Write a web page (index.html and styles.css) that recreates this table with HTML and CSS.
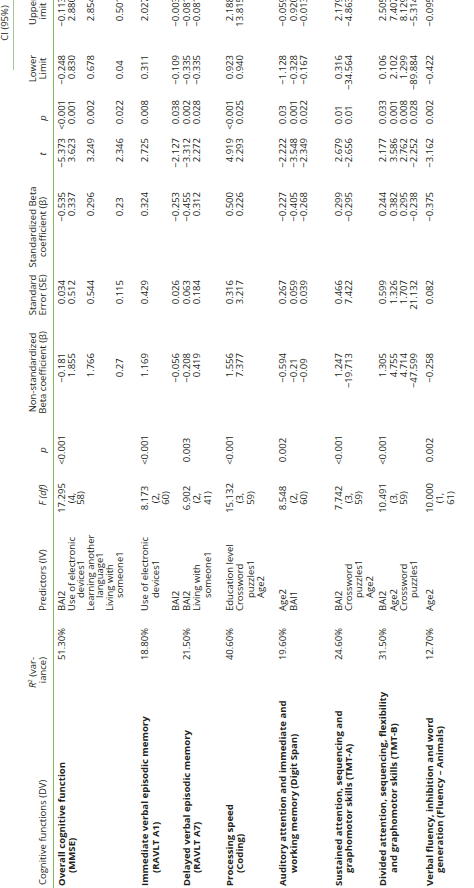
FILE: index.html
```html
<!DOCTYPE html>
<html lang="en">
<head>
<meta charset="utf-8">
<title>Regression table</title>
<link rel="stylesheet" href="styles.css">
</head>
<body>
<div class="viewport">
  <div class="sheet">
    <div class="thead">
      <div class="h dv"><span class="ln">Cognitive functions (DV)</span></div>
      <div class="h r2"><span class="ln"><i>R</i><sup>2</sup> (var-</span><span class="ln">iance)</span></div>
      <div class="h pr"><span class="ln">Predictors (IV)</span></div>
      <div class="h f"><span class="ln"><i>F (df)</i></span></div>
      <div class="h p"><span class="ln"><i>p</i></span></div>
      <div class="h ns"><span class="ln">Non-standardized</span><span class="ln">Beta coefficient (β)</span></div>
      <div class="h se"><span class="ln">Standard</span><span class="ln">Error (SE)</span></div>
      <div class="h sb"><span class="ln">Standardized Beta</span><span class="ln">coefficient (β)</span></div>
      <div class="h t"><span class="ln"><i>t</i></span></div>
      <div class="h p2"><span class="ln"><i>p</i></span></div>
      <div class="h ci"><span class="ln">CI (95%)</span></div>
      <div class="h lo"><span class="ln">Lower</span><span class="ln">Limit</span></div>
      <div class="h up"><span class="ln">Upper</span><span class="ln">imit</span></div>
    </div>

    <div class="grp g1">
      <div class="c dv"><span class="ln">Overall cognitive function</span><span class="ln ind">(MMSE)</span></div>
      <div class="c r2"><span class="ln">51.30%</span></div>
      <div class="c pr"><span class="ln">BAI2</span><span class="ln">Use of electronic</span><span class="ln ind">devices1</span><span class="ln">Learning another</span><span class="ln ind">language1</span><span class="ln">Living with</span><span class="ln ind">someone1</span></div>
      <div class="c f"><span class="ln">17.295</span><span class="ln">(4,</span><span class="ln">58)</span></div>
      <div class="c p"><span class="ln">&lt;0.001</span></div>
      <div class="c ns"><span class="ln">−0.181</span><span class="ln">1.855</span><span class="ln"></span><span class="ln">1.766</span><span class="ln"></span><span class="ln"></span><span class="ln d2">0.27</span></div>
      <div class="c se"><span class="ln">0.034</span><span class="ln">0.512</span><span class="ln"></span><span class="ln">0.544</span><span class="ln"></span><span class="ln"></span><span class="ln">0.115</span></div>
      <div class="c sb"><span class="ln">−0.535</span><span class="ln">0.337</span><span class="ln"></span><span class="ln">0.296</span><span class="ln"></span><span class="ln"></span><span class="ln d2">0.23</span></div>
      <div class="c t"><span class="ln">−5.373</span><span class="ln">3.623</span><span class="ln"></span><span class="ln">3.249</span><span class="ln"></span><span class="ln"></span><span class="ln">2.346</span></div>
      <div class="c p2"><span class="ln">&lt;0.001</span><span class="ln">0.001</span><span class="ln"></span><span class="ln">0.002</span><span class="ln"></span><span class="ln"></span><span class="ln">0.022</span></div>
      <div class="c lo"><span class="ln">−0.248</span><span class="ln">0.830</span><span class="ln"></span><span class="ln">0.678</span><span class="ln"></span><span class="ln"></span><span class="ln d2">0.04</span></div>
      <div class="c up"><span class="ln">−0.113</span><span class="ln">2.880</span><span class="ln"></span><span class="ln">2.854</span><span class="ln"></span><span class="ln"></span><span class="ln">0.501</span></div>
    </div>

    <div class="grp g2">
      <div class="c dv"><span class="ln">Immediate verbal episodic memory</span><span class="ln ind">(RAVLT A1)</span></div>
      <div class="c r2"><span class="ln">18.80%</span></div>
      <div class="c pr"><span class="ln">Use of electronic</span><span class="ln ind">devices1</span><span class="ln"></span><span class="ln">BAI2</span></div>
      <div class="c f"><span class="ln">8.173</span><span class="ln">(2,</span><span class="ln">60)</span></div>
      <div class="c p"><span class="ln">&lt;0.001</span></div>
      <div class="c ns"><span class="ln">1.169</span><span class="ln"></span><span class="ln"></span><span class="ln">−0.056</span></div>
      <div class="c se"><span class="ln">0.429</span><span class="ln"></span><span class="ln"></span><span class="ln">0.026</span></div>
      <div class="c sb"><span class="ln">0.324</span><span class="ln"></span><span class="ln"></span><span class="ln">−0.253</span></div>
      <div class="c t"><span class="ln">2.725</span><span class="ln"></span><span class="ln"></span><span class="ln">−2.127</span></div>
      <div class="c p2"><span class="ln">0.008</span><span class="ln"></span><span class="ln"></span><span class="ln">0.038</span></div>
      <div class="c lo"><span class="ln">0.311</span><span class="ln"></span><span class="ln"></span><span class="ln">−0.109</span></div>
      <div class="c up"><span class="ln">2.027</span><span class="ln"></span><span class="ln"></span><span class="ln">−0.003</span></div>
    </div>

    <div class="grp g3">
      <div class="c dv"><span class="ln">Delayed verbal episodic memory</span><span class="ln ind">(RAVLT A7)</span></div>
      <div class="c r2"><span class="ln">21.50%</span></div>
      <div class="c pr"><span class="ln">BAI2</span><span class="ln">Living with</span><span class="ln ind">someone1</span></div>
      <div class="c f"><span class="ln">6.902</span><span class="ln">(2,</span><span class="ln">41)</span></div>
      <div class="c p"><span class="ln">0.003</span></div>
      <div class="c ns"><span class="ln">−0.208</span><span class="ln">0.419</span></div>
      <div class="c se"><span class="ln">0.063</span><span class="ln">0.184</span></div>
      <div class="c sb"><span class="ln">−0.455</span><span class="ln">0.312</span></div>
      <div class="c t"><span class="ln">−3.312</span><span class="ln">2.272</span></div>
      <div class="c p2"><span class="ln">0.002</span><span class="ln">0.028</span></div>
      <div class="c lo"><span class="ln">−0.335</span><span class="ln">−0.335</span></div>
      <div class="c up"><span class="ln">−0.081</span><span class="ln">−0.081</span></div>
    </div>

    <div class="grp g4">
      <div class="c dv"><span class="ln">Processing speed</span><span class="ln ind">(Coding)</span></div>
      <div class="c r2"><span class="ln">40.60%</span></div>
      <div class="c pr"><span class="ln">Education level</span><span class="ln">Crossword</span><span class="ln ind">puzzles1</span><span class="ln ind">Age2</span></div>
      <div class="c f"><span class="ln">15.132</span><span class="ln">(3,</span><span class="ln">59)</span></div>
      <div class="c p"><span class="ln">&lt;0.001</span></div>
      <div class="c ns"><span class="ln">1.556</span><span class="ln">7.377</span></div>
      <div class="c se"><span class="ln">0.316</span><span class="ln">3.217</span></div>
      <div class="c sb"><span class="ln">0.500</span><span class="ln">0.226</span></div>
      <div class="c t"><span class="ln">4.919</span><span class="ln">2.293</span></div>
      <div class="c p2"><span class="ln">&lt;0.001</span><span class="ln">0.025</span></div>
      <div class="c lo"><span class="ln">0.923</span><span class="ln">0.940</span></div>
      <div class="c up"><span class="ln">2.188</span><span class="ln">13.815</span></div>
    </div>

    <div class="grp g5">
      <div class="c dv"><span class="ln">Auditory attention and immediate and</span><span class="ln ind">working memory (Digit Span)</span></div>
      <div class="c r2"><span class="ln">19.60%</span></div>
      <div class="c pr"><span class="ln">Age2</span><span class="ln">BAI1</span></div>
      <div class="c f"><span class="ln">8.548</span><span class="ln">(2,</span><span class="ln">60)</span></div>
      <div class="c p"><span class="ln">0.002</span></div>
      <div class="c ns"><span class="ln">−0.594</span><span class="ln d2">−0.21</span><span class="ln d2">−0.09</span></div>
      <div class="c se"><span class="ln">0.267</span><span class="ln">0.059</span><span class="ln">0.039</span></div>
      <div class="c sb"><span class="ln">−0.227</span><span class="ln">−0.405</span><span class="ln">−0.268</span></div>
      <div class="c t"><span class="ln">−2.222</span><span class="ln">−3.548</span><span class="ln">−2.349</span></div>
      <div class="c p2"><span class="ln d2">0.03</span><span class="ln">0.001</span><span class="ln">0.022</span></div>
      <div class="c lo"><span class="ln">−1.128</span><span class="ln">−0.328</span><span class="ln">−0.167</span></div>
      <div class="c up"><span class="ln">−0.059</span><span class="ln">0.920</span><span class="ln">−0.013</span></div>
    </div>

    <div class="grp g6">
      <div class="c dv"><span class="ln">Sustained attention, sequencing and</span><span class="ln ind">graphomotor skills (TMT-A)</span></div>
      <div class="c r2"><span class="ln">24.60%</span></div>
      <div class="c pr"><span class="ln">BAI2</span><span class="ln">Crossword</span><span class="ln ind">puzzles1</span><span class="ln ind">Age2</span></div>
      <div class="c f"><span class="ln">7.742</span><span class="ln">(3,</span><span class="ln">59)</span></div>
      <div class="c p"><span class="ln">&lt;0.001</span></div>
      <div class="c ns"><span class="ln">1.247</span><span class="ln">−19.713</span></div>
      <div class="c se"><span class="ln">0.466</span><span class="ln">7.422</span></div>
      <div class="c sb"><span class="ln">0.299</span><span class="ln">−0.295</span></div>
      <div class="c t"><span class="ln">2.679</span><span class="ln">−2.656</span></div>
      <div class="c p2"><span class="ln d2">0.01</span><span class="ln d2">0.01</span></div>
      <div class="c lo"><span class="ln">0.316</span><span class="ln">−34.564</span></div>
      <div class="c up"><span class="ln">2.179</span><span class="ln">−4.863</span></div>
    </div>

    <div class="grp g7">
      <div class="c dv"><span class="ln">Divided attention, sequencing, flexibility</span><span class="ln ind">and graphomotor skills (TMT-B)</span></div>
      <div class="c r2"><span class="ln">31.50%</span></div>
      <div class="c pr"><span class="ln">BAI2</span><span class="ln">Age2</span><span class="ln">Crossword</span><span class="ln ind">puzzles1</span></div>
      <div class="c f"><span class="ln">10.491</span><span class="ln">(3,</span><span class="ln">59)</span></div>
      <div class="c p"><span class="ln">&lt;0.001</span></div>
      <div class="c ns"><span class="ln">1.305</span><span class="ln">4.755</span><span class="ln">4.714</span><span class="ln">−47.599</span></div>
      <div class="c se"><span class="ln">0.599</span><span class="ln">1.326</span><span class="ln">1.707</span><span class="ln">21.132</span></div>
      <div class="c sb"><span class="ln">0.244</span><span class="ln">0.382</span><span class="ln">0.295</span><span class="ln">−0.238</span></div>
      <div class="c t"><span class="ln">2.177</span><span class="ln">3.586</span><span class="ln">2.762</span><span class="ln">−2.252</span></div>
      <div class="c p2"><span class="ln">0.033</span><span class="ln">0.001</span><span class="ln">0.008</span><span class="ln">0.028</span></div>
      <div class="c lo"><span class="ln">0.106</span><span class="ln">2.102</span><span class="ln">1.299</span><span class="ln">−89.884</span></div>
      <div class="c up"><span class="ln">2.505</span><span class="ln">7.407</span><span class="ln">8.129</span><span class="ln">−5.314</span></div>
    </div>

    <div class="grp g8">
      <div class="c dv"><span class="ln">Verbal fluency, inhibition and word</span><span class="ln ind">generation (Fluency – Animals)</span></div>
      <div class="c r2"><span class="ln">12.70%</span></div>
      <div class="c pr"><span class="ln">Age2</span></div>
      <div class="c f"><span class="ln">10.000</span><span class="ln">(1,</span><span class="ln">61)</span></div>
      <div class="c p"><span class="ln">0.002</span></div>
      <div class="c ns"><span class="ln">−0.258</span></div>
      <div class="c se"><span class="ln">0.082</span></div>
      <div class="c sb"><span class="ln">−0.375</span></div>
      <div class="c t"><span class="ln">−3.162</span></div>
      <div class="c p2"><span class="ln">0.002</span></div>
      <div class="c lo"><span class="ln">−0.422</span></div>
      <div class="c up"><span class="ln">−0.095</span></div>
    </div>
  </div>
</div>
</body>
</html>
```

FILE: styles.css
```css
html, body {
  margin: 0;
  padding: 0;
  background: #ffffff;
}

.viewport {
  width: 474px;
  height: 888px;
  overflow: hidden;
  background: #ffffff;
}

/* the table is printed sideways: laid out upright, then turned a quarter turn */
.sheet {
  width: 912px;
  height: 474px;
  transform-origin: 0 0;
  transform: translateY(888px) rotate(-90deg);
  font-family: "Open Sans", "Noto Sans", "DejaVu Sans", sans-serif;
  font-size: 9.5px;
  color: #231f20;
  --cols: 188px 74px 110px 40px 82px 62px 62px 82px 56px 40px 52px 64px;
}

.ln {
  display: block;
  white-space: nowrap;
  height: var(--lh, 10px);
  line-height: var(--lh, 10px);
}

.ind { padding-left: 13px; }
.d2 { padding-right: 0.572em; }

sup {
  font-size: 6px;
  line-height: 0;
  vertical-align: 4px;
}

/* header */
.thead {
  display: grid;
  grid-template-columns: var(--cols);
  grid-template-rows: 14px 39px;
  border-bottom: 1px solid #84bb5c;
  --lh: 10px;
}

.h {
  grid-row: 1 / 3;
  align-self: end;
  padding-bottom: 5px;
  display: flex;
  flex-direction: column;
  align-items: center;
}

.h.dv { align-items: flex-start; padding-left: 3px; }
.h.r2 { align-items: flex-end; padding-right: 31px; }
.h.pr { align-items: flex-start; padding-left: 15px; }
.h.f { padding-left: 2px; }
.h.p { padding-right: 30px; }
.h.ns { padding-right: 19px; }
.h.se { padding-left: 12px; }
.h.sb { padding-left: 4px; }
.h.t { padding-left: 16px; padding-right: 4px; }
.h.p2 { padding-right: 12px; }
.h.lo { grid-column: 11; grid-row: 2; padding-left: 10px; padding-right: 15px; }
.h.up { grid-column: 12; grid-row: 2; padding-left: 15px; padding-right: 21px; }

.h.ci {
  grid-column: 11 / 13;
  grid-row: 1;
  align-self: stretch;
  margin-left: 22px;
  padding-bottom: 3px;
  border-bottom: 1px solid #a9c796;
}

/* body rows */
.grp {
  display: grid;
  grid-template-columns: var(--cols);
  align-items: start;
  --lh: 10.4px;
}

.g1 { --lh: 9.6px; margin-top: 3px; }
.g2 { margin-top: 16px; }
.g3 { margin-top: 0; }
.g4 { margin-top: 12px; }
.g5 { margin-top: 12px; }
.g6 { margin-top: 24px; }
.g7 { margin-top: 3px; }
.g8 { margin-top: 5px; }

.c.dv { font-weight: 700; font-size: 9.6px; padding-left: 2px; }
.c.r2 { text-align: right; padding-right: 2px; }
.c.pr { padding-left: 15px; }
.c.f { text-align: center; padding-right: 4px; }
.c.p { text-align: center; padding-right: 30px; }
.c.ns { text-align: right; padding-right: 21px; }
.c.se { text-align: right; padding-right: 10px; }
.c.sb { text-align: right; padding-right: 4px; }
.c.t { text-align: right; padding-right: 6px; }
.c.p2 { text-align: right; padding-right: 8px; }
.c.lo { text-align: right; padding-right: 15px; }
.c.up { text-align: right; padding-right: 21px; }
```
